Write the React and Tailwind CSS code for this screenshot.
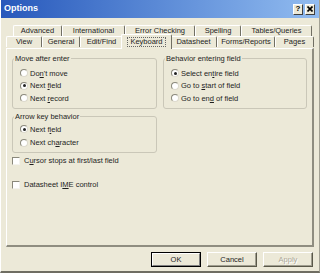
import React from "react";

const row1 = [
  { label: "Advanced", w: "w-[49px]" },
  { label: "International", w: "w-[63px]" },
  { label: "Error Checking", w: "w-[70px]" },
  { label: "Spelling", w: "w-[46px]" },
  { label: "Tables/Queries", w: "w-[71px]" },
];

const row2 = [
  { label: "View", w: "w-[36px]" },
  { label: "General", w: "w-[38px]" },
  { label: "Edit/Find", w: "w-[43px]" },
  { label: "Keyboard", w: "w-[47px]", active: true },
  { label: "Datasheet", w: "w-[47px]" },
  { label: "Forms/Reports", w: "w-[58px]" },
  { label: "Pages", w: "w-[39px]" },
];

const Tab = ({ label, w, active }) =>
  active ? (
    <div
      className={`${w} relative z-10 -mx-[2px] -mt-[2px] -mb-[1px] box-content flex h-[14px] items-center justify-center rounded-t-[2px] border-l border-t border-r border-l-white border-t-white border-r-[#716f64] bg-[#ece9d8] px-[1px]`}
    >
      <span className="border border-dotted border-[#666] px-[2px] leading-[8px]">{label}</span>
    </div>
  ) : (
    <div
      className={`${w} flex h-[11px] items-center justify-center rounded-t-[2px] border-l border-t border-r border-l-white border-t-white border-r-[#716f64] bg-[#ece9d8]`}
    >
      {label}
    </div>
  );

const Radio = ({ checked }) => (
  <span className="flex h-[8px] w-[8px] shrink-0 items-center justify-center rounded-full border border-l-[#8a887b] border-t-[#8a887b] border-r-[#dcd9cc] border-b-[#dcd9cc] bg-white">
    {checked && <span className="h-[3px] w-[3px] rounded-full bg-[#222]" />}
  </span>
);

const Option = ({ checked, h, children }) => (
  <div className={`flex items-center gap-[2px] pl-[7px] ${h}`}>
    <Radio checked={checked} />
    <span>{children}</span>
  </div>
);

const Check = ({ className, children }) => (
  <div className={`flex h-[12px] items-center gap-[4px] ${className}`}>
    <span className="h-[8px] w-[8px] shrink-0 border border-l-[#8a887b] border-t-[#8a887b] border-r-[#f4f3ee] border-b-[#f4f3ee] bg-white" />
    <span>{children}</span>
  </div>
);

const Group = ({ title, className, children }) => (
  <fieldset className={`rounded-[3px] border border-[#cac7b8] ${className}`}>
    <legend className="ml-[1px] px-[1px] leading-[9px]">{title}</legend>
    {children}
  </fieldset>
);

const Btn = ({ children, def, disabled }) =>
  def ? (
    <div className="h-[15px] w-[50px] border border-black">
      <div className="flex h-full items-center justify-center border-l border-t border-r border-b border-l-white border-t-white border-r-[#808080] border-b-[#808080]">
        {children}
      </div>
    </div>
  ) : (
    <div
      className={`flex h-[15px] w-[50px] items-center justify-center border-l border-t border-r border-b border-l-white border-t-white border-r-[#5a5849] border-b-[#5a5849] shadow-[inset_-1px_-1px_0_#a09e90] ${
        disabled ? "text-[#aca899] [text-shadow:1px_1px_0_#fff]" : ""
      }`}
    >
      {children}
    </div>
  );

export default function App() {
  return (
    <div className="flex h-[273px] w-[320px] flex-col overflow-hidden border-b-2 border-l border-r border-b-[#6f6d62] border-l-white border-r-[#a3a194] bg-[#ece9d8] font-['Liberation_Sans',Arial,sans-serif] text-[7.5px] text-[#1e1e1e]">
      {/* title bar */}
      <div className="flex h-[18px] shrink-0 items-center justify-between bg-linear-to-r from-[#2858bb] to-[#92bcf0] pl-[3px] pr-[4px]">
        <span className="text-[9px] font-bold text-white">Options</span>
        <div className="flex gap-[2px]">
          <div className="flex h-[11px] w-[10px] items-center justify-center border border-l-white border-t-white border-r-[#404040] border-b-[#404040] bg-[#ece9d8] text-[8px] font-bold leading-none text-black">
            ?
          </div>
          <div className="flex h-[11px] w-[10px] items-center justify-center border border-l-white border-t-white border-r-[#404040] border-b-[#404040] bg-[#ece9d8]">
            <svg width="6" height="6" viewBox="0 0 6 6">
              <path d="M0.5 0.5 L5.5 5.5 M5.5 0.5 L0.5 5.5" stroke="#000" strokeWidth="1.6" />
            </svg>
          </div>
        </div>
      </div>

      {/* tabs */}
      <div className="flex pl-[12px] pt-[7px]">
        {row1.map((t) => (
          <Tab key={t.label} {...t} />
        ))}
      </div>
      <div className="flex pl-[5px]">
        {row2.map((t) => (
          <Tab key={t.label} {...t} />
        ))}
      </div>

      {/* panel */}
      <div className="mx-[5px] flex h-[199px] shrink-0 flex-col border-l border-t border-r-2 border-b-2 border-l-white border-t-white border-r-[#8f8d80] border-b-[#8f8d80] px-[5px] pt-[5px]">
        <div className="flex gap-[6px]">
          <div className="flex w-[145px] flex-col">
            <Group title="Move after enter" className="pb-[3px] pt-[4px]">
              <Option h="h-[12.5px]">
                Do<u>n</u>'t move
              </Option>
              <Option h="h-[12.5px]" checked>
                Next <u>f</u>ield
              </Option>
              <Option h="h-[12.5px]">
                Next <u>r</u>ecord
              </Option>
            </Group>
            <Group title="Arrow key behavior" className="mt-[3px] pb-[2px] pt-[2px]">
              <Option h="h-[13.5px]" checked>
                Next f<u>i</u>eld
              </Option>
              <Option h="h-[13.5px]">
                Next ch<u>a</u>racter
              </Option>
            </Group>
            <Check className="mt-[2px]">
              C<u>u</u>rsor stops at first/last field
            </Check>
            <Check className="mt-[12px]">
              Datasheet I<u>M</u>E control
            </Check>
          </div>
          <div className="flex w-[144px] flex-col">
            <Group title="Behavior entering field" className="pb-[3px] pt-[4px]">
              <Option h="h-[12.5px]" checked>
                Select en<u>t</u>ire field
              </Option>
              <Option h="h-[12.5px]">
                Go to <u>s</u>tart of field
              </Option>
              <Option h="h-[12.5px]">
                Go to en<u>d</u> of field
              </Option>
            </Group>
          </div>
        </div>
      </div>

      {/* buttons */}
      <div className="mt-[5px] flex justify-end gap-[6px] pr-[6px]">
        <Btn def>OK</Btn>
        <Btn>Cancel</Btn>
        <Btn disabled>Apply</Btn>
      </div>
    </div>
  );
}
